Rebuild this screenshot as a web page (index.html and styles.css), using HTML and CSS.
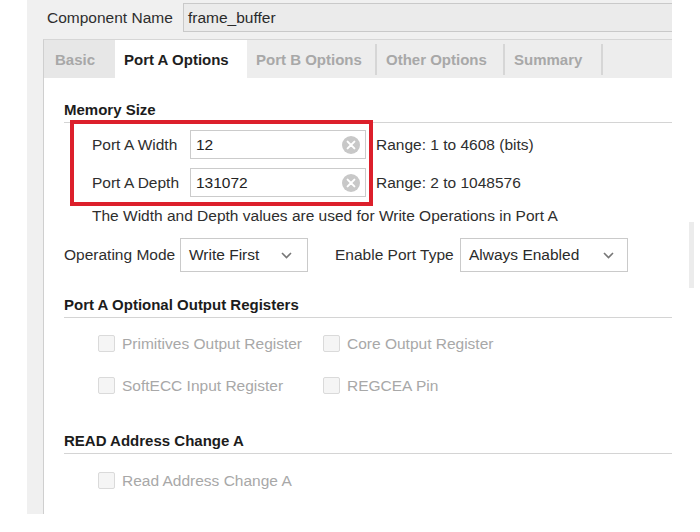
FILE: index.html
```html
<!DOCTYPE html>
<html lang="en">
<head>
    <meta charset="UTF-8">
    <title>Block Memory Generator - Port A Options</title>
    <link rel="stylesheet" href="styles.css">
</head>
<body>

    <div class="screen">
        <div class="window">

            <!-- Component name -->
            <div class="name-row">
                <span class="name-label">Component Name</span>
                <div class="name-input">frame_buffer</div>
            </div>

            <!-- Tabbed panel -->
            <div class="tabs">
                <div class="tab-bar">
                    <div class="tab tab-basic">Basic</div>
                    <div class="tab tab-active">Port A Options</div>
                    <div class="tab tab-sep tab-b">Port B Options</div>
                    <div class="tab tab-sep tab-other">Other Options</div>
                    <div class="tab tab-sep tab-summary">Summary</div>
                </div>

                <div class="tab-body">
                    <div class="section-title">Memory Size</div>

                    <div class="size-block">
                        <div class="highlight">
                            <div class="field-row">
                                <span class="field-label">Port A Width</span>
                                <div class="field-input">
                                    <span>12</span>
                                    <svg class="clear-icon" width="18" height="18" viewBox="0 0 18 18">
                                        <circle cx="9" cy="9" r="9" fill="#c8c8c8"/>
                                        <path d="M5.6 5.6 L12.4 12.4 M12.4 5.6 L5.6 12.4" stroke="#fff" stroke-width="2" stroke-linecap="round"/>
                                    </svg>
                                </div>
                            </div>
                            <div class="field-row">
                                <span class="field-label">Port A Depth</span>
                                <div class="field-input">
                                    <span>131072</span>
                                    <svg class="clear-icon" width="18" height="18" viewBox="0 0 18 18">
                                        <circle cx="9" cy="9" r="9" fill="#c8c8c8"/>
                                        <path d="M5.6 5.6 L12.4 12.4 M12.4 5.6 L5.6 12.4" stroke="#fff" stroke-width="2" stroke-linecap="round"/>
                                    </svg>
                                </div>
                            </div>
                        </div>
                        <div class="ranges">
                            <div class="range">Range: 1 to 4608 (bits)</div>
                            <div class="range">Range: 2 to 1048576</div>
                        </div>
                    </div>

                    <div class="note">The Width and Depth values are used for Write Operations in Port A</div>

                    <div class="mode-row">
                        <span class="mode-label">Operating Mode</span>
                        <div class="select select-mode">
                            <span>Write First</span>
                            <svg width="11" height="7" viewBox="0 0 11 7"><path d="M1 1 L5.5 5.5 L10 1" fill="none" stroke="#777" stroke-width="1.6"/></svg>
                        </div>
                        <span class="mode-label enable-label">Enable Port Type</span>
                        <div class="select select-enable">
                            <span>Always Enabled</span>
                            <svg width="11" height="7" viewBox="0 0 11 7"><path d="M1 1 L5.5 5.5 L10 1" fill="none" stroke="#777" stroke-width="1.6"/></svg>
                        </div>
                    </div>

                    <div class="section-title registers-title">Port A Optional Output Registers</div>
                    <div class="check-grid">
                        <label class="check"><span class="box"></span>Primitives Output Register</label>
                        <label class="check"><span class="box"></span>Core Output Register</label>
                        <label class="check"><span class="box"></span>SoftECC Input Register</label>
                        <label class="check"><span class="box"></span>REGCEA Pin</label>
                    </div>

                    <div class="section-title read-title">READ Address Change A</div>
                    <div class="check-grid read-grid">
                        <label class="check"><span class="box"></span>Read Address Change A</label>
                    </div>
                </div>
            </div>
        </div>

        <div class="scroll-stub"></div>
    </div>

</body>
</html>
```

FILE: styles.css
```css
body {
    margin: 0;
    padding: 0;
    background-color: #fff;
    font-family: "Liberation Sans", Arial, sans-serif;
    font-size: 15.5px;
    color: #2e2e2e;
}

.screen {
    display: flex;
    align-items: flex-start;
}

/* Dialog window */
.window {
    margin-left: 27px;
    width: 645px;
    height: 514px;
    background-color: #f0f0f0;
    display: flex;
    flex-direction: column;
}

.scroll-stub {
    margin-left: 17px;
    margin-top: 222px;
    width: 5px;
    height: 66px;
    background-color: #ececec;
}

.name-row {
    display: flex;
    align-items: center;
    padding: 3px 0 7px 20px;
}
.name-label {
    width: 136px;
    flex-shrink: 0;
}
.name-input {
    flex: 1;
    height: 29px;
    box-sizing: border-box;
    border: 1px solid #c9c9c9;
    border-right: none;
    background-color: #ebebeb;
    padding-left: 4px;
    line-height: 27px;
    color: #2a2a2a;
}

/* Tabs */
.tabs {
    flex: 1;
    margin-left: 16px;
    border-left: 1px solid #cfcfcf;
    border-top: 1px solid #d6d6d6;
    background-color: #fff;
    display: flex;
    flex-direction: column;
}
.tab-bar {
    height: 38px;
    display: flex;
    align-items: center;
    background-color: #ededed;
}
.tab {
    box-sizing: border-box;
    padding-left: 9px;
    font-size: 15px;
    font-weight: bold;
    color: #a8a8a8;
    display: flex;
    align-items: center;
}
.tab-basic {
    width: 71px;
    height: 38px;
    padding-left: 11px;
    background-color: #e7e7e7;
}
.tab-active {
    width: 132px;
    height: 38px;
    background-color: #fff;
    color: #1e1e1e;
}
.tab-sep {
    height: 31px;
    border-right: 2px solid #d6d6d6;
}
.tab-b { width: 130px; }
.tab-other { width: 128px; }
.tab-summary { width: 98px; }

.tab-body {
    padding: 23px 0 0 20px;
}

.section-title {
    font-size: 15px;
    font-weight: bold;
    line-height: 18px;
    padding-bottom: 3px;
    border-bottom: 1px solid #d4d4d4;
    color: #1c1c1c;
}

/* Memory size */
.size-block {
    display: flex;
    margin-top: -3px;
}
.highlight {
    margin-left: 6px;
    width: 303px;
    box-sizing: border-box;
    border: 4px solid #dc1f2b;
    padding: 6px 3px 5px 18px;
    display: flex;
    flex-direction: column;
    gap: 9px;
}
.field-row {
    display: flex;
    align-items: center;
    height: 29px;
}
.field-label {
    width: 98px;
    flex-shrink: 0;
}
.field-input {
    flex: 1;
    height: 29px;
    box-sizing: border-box;
    border: 1px solid #cbcbcb;
    display: flex;
    align-items: center;
    justify-content: space-between;
    padding: 0 5px 0 5px;
    color: #222;
}
.ranges {
    margin-left: 3px;
    padding-top: 10px;
    display: flex;
    flex-direction: column;
    gap: 9px;
}
.range {
    height: 29px;
    line-height: 29px;
}

.note {
    margin-top: 1px;
    padding-left: 28px;
    line-height: 18px;
}

/* Operating mode */
.mode-row {
    margin-top: 13px;
    display: flex;
    align-items: center;
}
.mode-label {
    width: 116px;
    flex-shrink: 0;
}
.enable-label {
    margin-left: 27px;
    width: 125px;
}
.select {
    height: 34px;
    box-sizing: border-box;
    border: 1px solid #cacaca;
    background-color: #fff;
    display: flex;
    align-items: center;
    justify-content: space-between;
    padding: 0 15px 0 8px;
    color: #2a2a2a;
}
.select-mode { width: 128px; }
.select-enable {
    width: 168px;
    padding-right: 13px;
}

/* Checkbox groups */
.registers-title { margin-top: 24px; }
.read-title { margin-top: 38px; }

.check-grid {
    display: grid;
    grid-template-columns: 225px auto;
    row-gap: 25px;
    padding-left: 34px;
    margin-top: 17px;
}
.read-grid { margin-top: 18px; }

.check {
    display: flex;
    align-items: center;
    gap: 7px;
    height: 17px;
    color: #a8a8a8;
}
.box {
    width: 17px;
    height: 17px;
    box-sizing: border-box;
    border: 1px solid #dadada;
    border-radius: 2px;
    background-color: #f5f5f5;
}
```
